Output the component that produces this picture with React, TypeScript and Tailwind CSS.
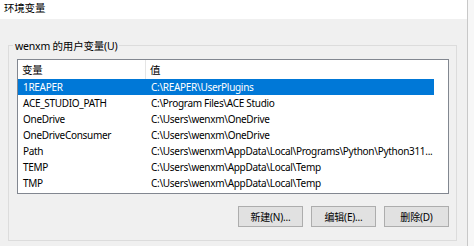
import React from 'react';

interface EnvVar {
    name: string;
    value: string;
}

const userVars: EnvVar[] = [
    { name: '1REAPER', value: 'C:\\REAPER\\UserPlugins' },
    { name: 'ACE_STUDIO_PATH', value: 'C:\\Program Files\\ACE Studio' },
    { name: 'OneDrive', value: 'C:\\Users\\wenxm\\OneDrive' },
    { name: 'OneDriveConsumer', value: 'C:\\Users\\wenxm\\OneDrive' },
    { name: 'Path', value: 'C:\\Users\\wenxm\\AppData\\Local\\Programs\\Python\\Python311...' },
    { name: 'TEMP', value: 'C:\\Users\\wenxm\\AppData\\Local\\Temp' },
    { name: 'TMP', value: 'C:\\Users\\wenxm\\AppData\\Local\\Temp' },
];

const font = "font-['Segoe_UI','Noto_Sans','Noto_Sans_CJK_SC',sans-serif]";

const DialogButton: React.FC<{ label: string }> = ({ label }) => (
    <button
        type="button"
        className="w-[65px] h-[21px] bg-[#e1e1e1] border border-[#adadad] text-[10px] leading-none text-black"
    >
        {label}
    </button>
);

export default function App() {
    const selected = 0;

    return (
        <div className={`${font} w-[474px] h-[246px] bg-[#f0f0f0] flex overflow-hidden text-black tracking-[-0.2px]`}>
            <div className="w-[467px] flex flex-col">
                {/* title bar */}
                <div className="h-[19px] bg-white text-[10.5px] leading-[17px] pl-[4px]">环境变量</div>

                {/* group box */}
                <div className="relative ml-[8px] mt-[26px] w-[449px] h-[196px] border border-[#dcdcdc] pl-[8px] pt-[13px]">
                    <span className="absolute -top-[8px] left-[4px] bg-[#f0f0f0] px-[2px] text-[10.5px] leading-[16px]">
                        wenxm 的用户变量(U)
                    </span>

                    {/* list view */}
                    <div className="w-[432px] h-[135px] border border-[#828790] bg-white">
                        <div className="flex h-[19px] text-[10.5px] leading-[20px]">
                            <div className="w-[128px] shrink-0 pl-[4px] border-r border-[#e5e5e5]">变量</div>
                            <div className="pl-[4px]">值</div>
                        </div>
                        {userVars.map((v, i) => (
                            <div
                                key={v.name}
                                className={`flex w-[416px] h-[16px] text-[10px] leading-[16px] whitespace-nowrap tracking-[-0.3px] ${
                                    i === selected ? 'bg-[#0078d7] text-white' : ''
                                }`}
                            >
                                <div className="w-[128px] shrink-0 pl-[5px]">{v.name}</div>
                                <div className="pl-[5px]">{v.value}</div>
                            </div>
                        ))}
                    </div>

                    {/* buttons */}
                    <div className="flex justify-end gap-[8px] w-[432px] mt-[12px]">
                        <DialogButton label="新建(N)..." />
                        <DialogButton label="编辑(E)..." />
                        <DialogButton label="删除(D)" />
                    </div>
                </div>
            </div>
            <div className="flex-1 border-l border-[#c8c8c8] bg-[#f7f7f7]" />
        </div>
    );
}
